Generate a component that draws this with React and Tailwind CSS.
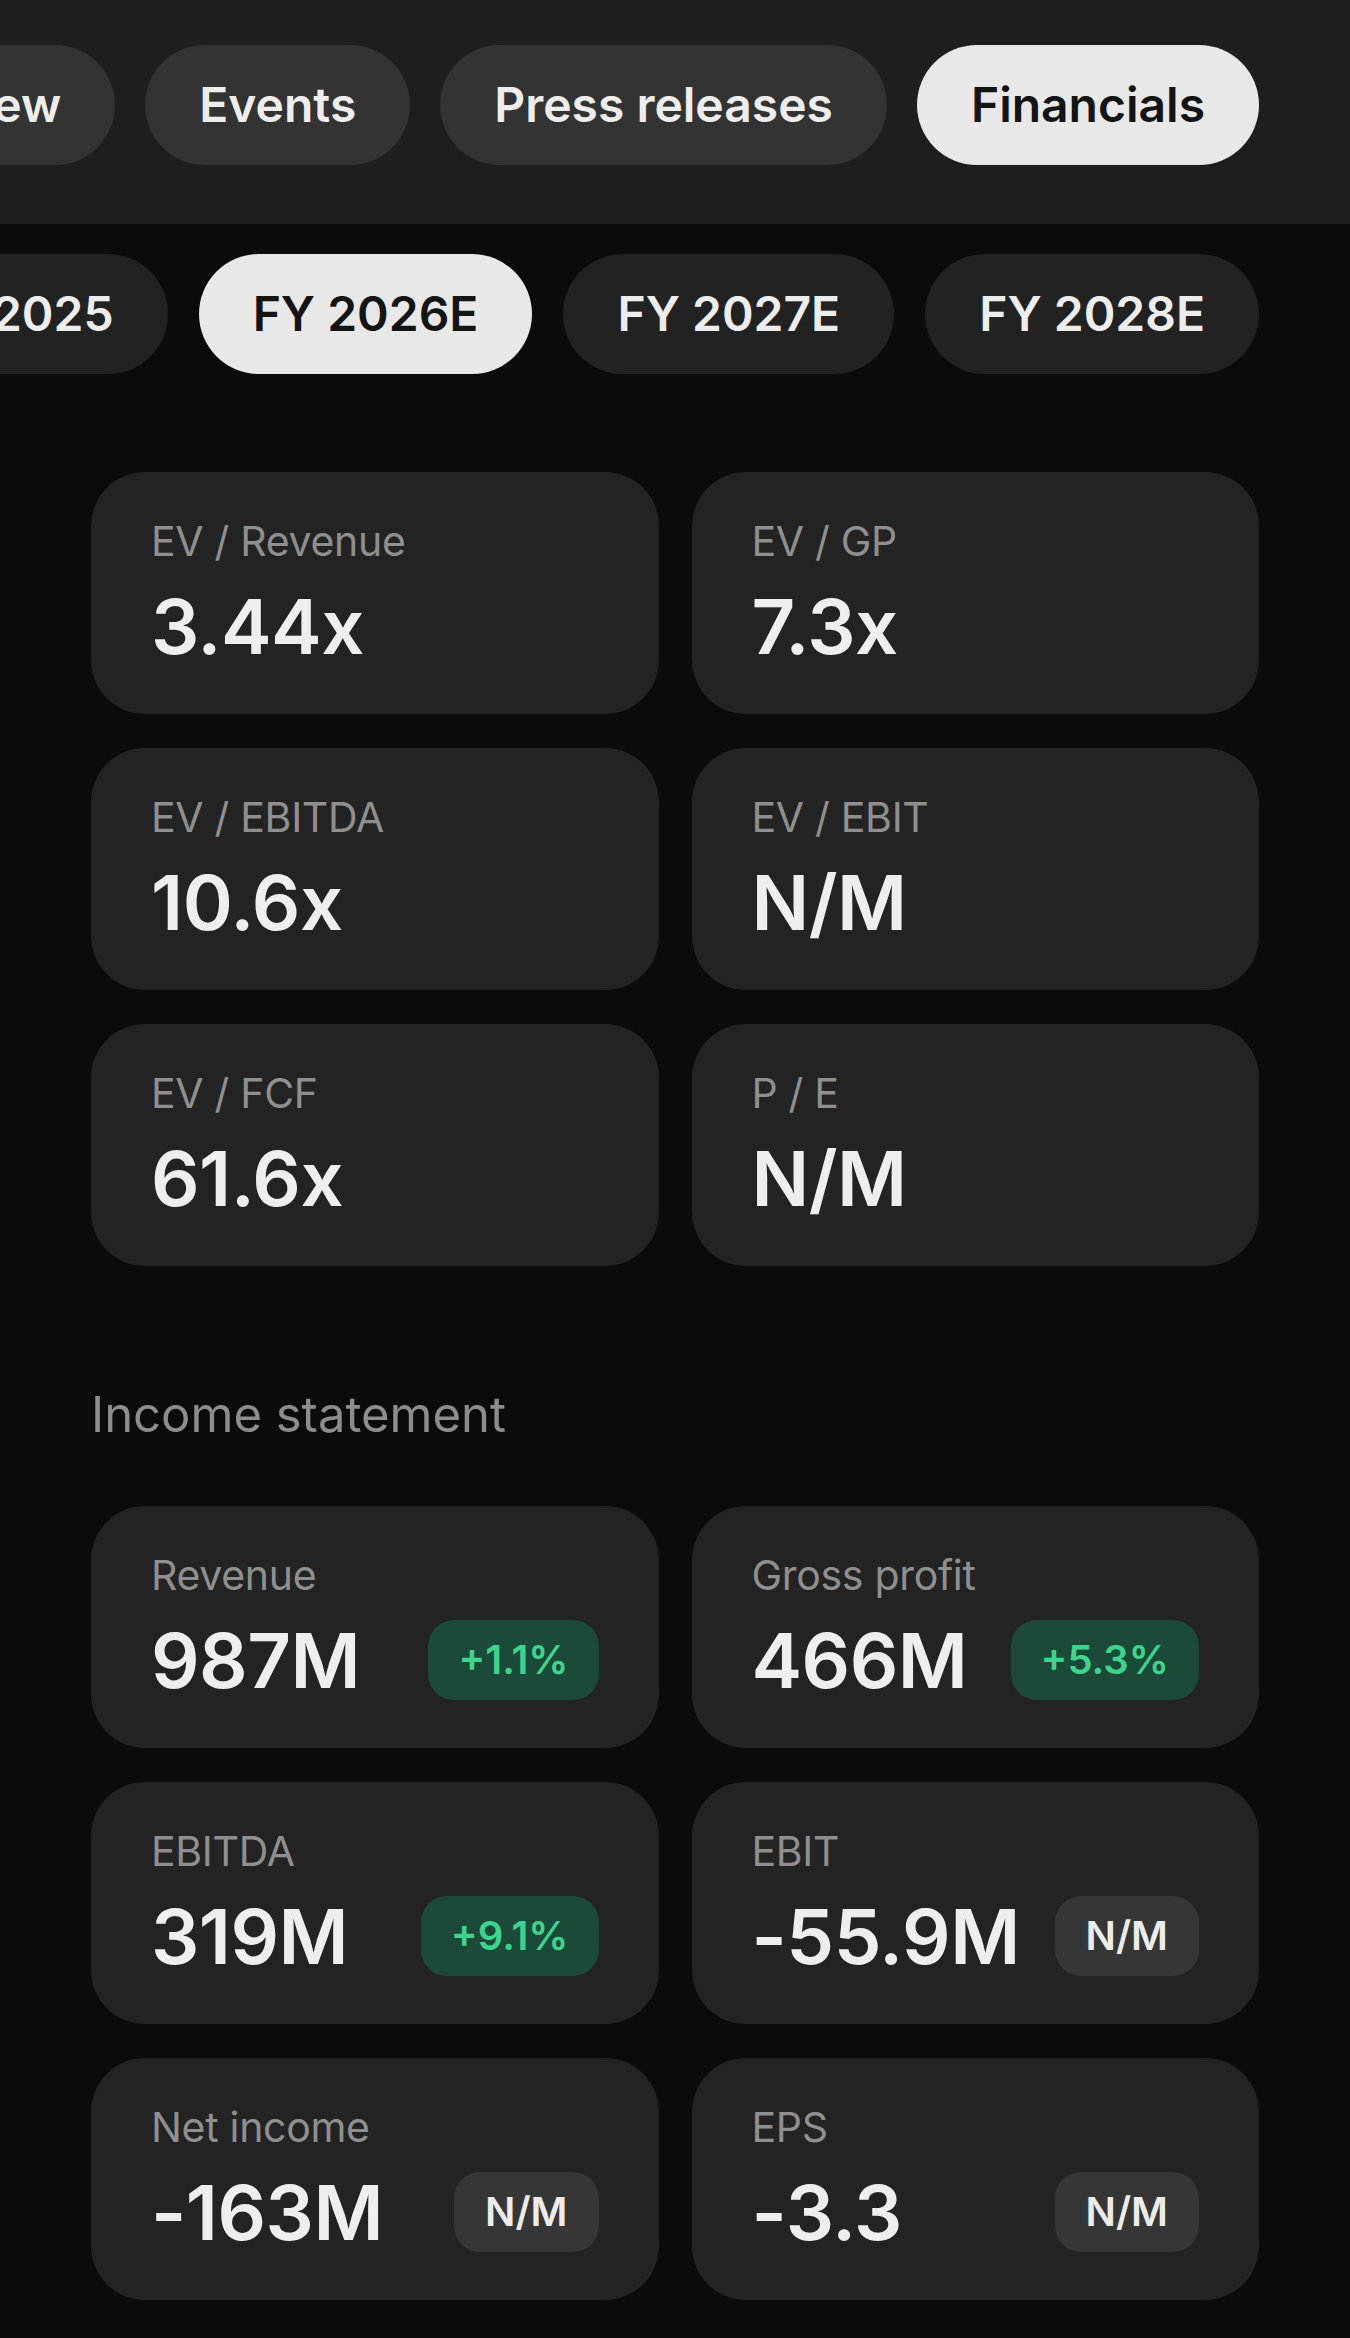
import React from "react";

const tabs = ["Overview", "Events", "Press releases", "Financials"];
const years = ["FY 2023", "FY 2024", "FY 2025", "FY 2026E", "FY 2027E", "FY 2028E"];

const multiples = [
  { label: "EV / Revenue", value: "3.44x" },
  { label: "EV / GP", value: "7.3x" },
  { label: "EV / EBITDA", value: "10.6x" },
  { label: "EV / EBIT", value: "N/M" },
  { label: "EV / FCF", value: "61.6x" },
  { label: "P / E", value: "N/M" },
];

const income = [
  { label: "Revenue", value: "987M", change: "+1.1%" },
  { label: "Gross profit", value: "466M", change: "+5.3%" },
  { label: "EBITDA", value: "319M", change: "+9.1%" },
  { label: "EBIT", value: "-55.9M", change: null },
  { label: "Net income", value: "-163M", change: null },
  { label: "EPS", value: "-3.3", change: null },
];

function Pill({ active, dark, children }) {
  return (
    <div
      className={`shrink-0 h-[120px] px-[54px] rounded-full flex items-center whitespace-nowrap text-[48px] font-semibold ${
        active
          ? "bg-[#e8e8e8] text-[#141414]"
          : dark
          ? "bg-[#222222] text-[#ededed]"
          : "bg-[#333334] text-[#ededed]"
      }`}
    >
      {children}
    </div>
  );
}

function Card({ label, value, badge }) {
  return (
    <div className="bg-[#232323] rounded-[54px] pt-[41px] pb-[45px] px-[60px]">
      <div className="text-[41px] leading-[56px] text-[#8f8f8f] tracking-[-0.3px]">{label}</div>
      <div className="mt-[14px] h-[86px] flex items-center justify-between">
        <span className="text-[76px] leading-[86px] font-semibold text-[#eeeeee] tracking-[-0.5px]">
          {value}
        </span>
        {badge}
      </div>
    </div>
  );
}

function Badge({ change }) {
  if (change) {
    return (
      <span className="h-[80px] px-[30px] rounded-[26px] flex items-center bg-[#1c4a38] text-[#3ed48e] text-[40px] font-semibold">
        {change}
      </span>
    );
  }
  return (
    <span className="h-[80px] px-[31px] rounded-[26px] flex items-center bg-[#363636] text-[#ececec] text-[40px] font-semibold">
      N/M
    </span>
  );
}

export default function App() {
  return (
    <div className="min-h-screen bg-[#0b0b0b] pb-[41px] font-['Inter','Noto_Sans',sans-serif]">
      {/* Section tabs */}
      <div className="bg-[#1e1e1e] pt-[45px] pb-[59px] pr-[91px] flex justify-end gap-[30px] overflow-hidden">
        {tabs.map((t) => (
          <Pill key={t} active={t === "Financials"}>
            {t}
          </Pill>
        ))}
      </div>

      {/* Fiscal years */}
      <div className="pt-[30px] pr-[91px] flex justify-end gap-[31px] overflow-hidden">
        {years.map((y) => (
          <Pill key={y} dark active={y === "FY 2026E"}>
            {y}
          </Pill>
        ))}
      </div>

      <div className="px-[91px]">
        {/* Multiples */}
        <div className="mt-[98px] grid grid-cols-2 gap-x-[33px] gap-y-[34px]">
          {multiples.map((m) => (
            <Card key={m.label} label={m.label} value={m.value} />
          ))}
        </div>

        <div className="mt-[120px] text-[49px] leading-[58px] text-[#8d8d8d]">Income statement</div>

        <div className="mt-[62px] grid grid-cols-2 gap-x-[33px] gap-y-[34px]">
          {income.map((r) => (
            <Card key={r.label} label={r.label} value={r.value} badge={<Badge change={r.change} />} />
          ))}
        </div>
      </div>
    </div>
  );
}
